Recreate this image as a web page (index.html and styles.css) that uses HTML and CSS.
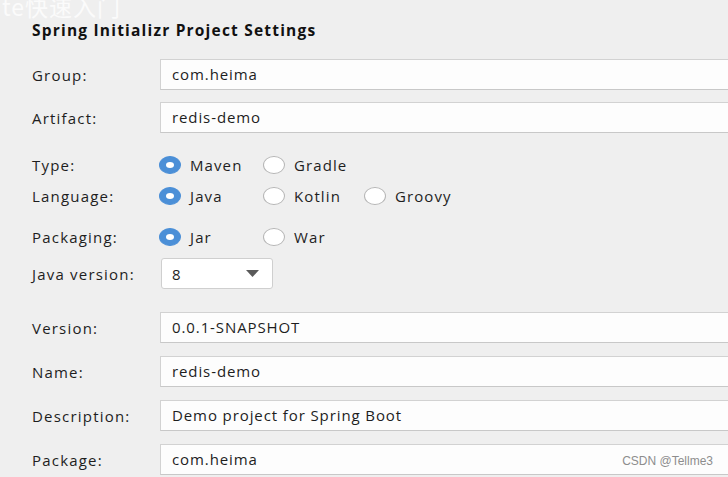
FILE: index.html
```html
<!DOCTYPE html>
<html>
<head>
<meta charset="utf-8">
<link rel="stylesheet" href="styles.css">
</head>
<body>
<div class="overlay-title">te快速入门</div>
<div class="page">
  <h1 class="title">Spring Initializr Project Settings</h1>

  <div class="row row-group">
    <span class="label">Group:</span>
    <div class="field">com.heima</div>
  </div>
  <div class="row row-artifact">
    <span class="label">Artifact:</span>
    <div class="field">redis-demo</div>
  </div>

  <div class="row radio-row row-type">
    <span class="label">Type:</span>
    <div class="options">
      <span class="opt"><span class="radio checked"></span>Maven</span>
      <span class="opt"><span class="radio"></span>Gradle</span>
    </div>
  </div>
  <div class="row radio-row row-lang">
    <span class="label">Language:</span>
    <div class="options">
      <span class="opt"><span class="radio checked"></span>Java</span>
      <span class="opt"><span class="radio"></span>Kotlin</span>
      <span class="opt"><span class="radio"></span>Groovy</span>
    </div>
  </div>
  <div class="row radio-row row-pack">
    <span class="label">Packaging:</span>
    <div class="options">
      <span class="opt"><span class="radio checked"></span>Jar</span>
      <span class="opt"><span class="radio"></span>War</span>
    </div>
  </div>
  <div class="row row-java">
    <span class="label">Java version:</span>
    <div class="select">
      <span>8</span>
      <svg class="arrow" width="13" height="7" viewBox="0 0 13 7"><path d="M0 0 H13 L6.5 7 Z" fill="#5a5a5a"/></svg>
    </div>
  </div>

  <div class="row row-version">
    <span class="label">Version:</span>
    <div class="field">0.0.1-SNAPSHOT</div>
  </div>
  <div class="row row-next">
    <span class="label">Name:</span>
    <div class="field">redis-demo</div>
  </div>
  <div class="row row-next">
    <span class="label">Description:</span>
    <div class="field">Demo project for Spring Boot</div>
  </div>
  <div class="row row-next">
    <span class="label">Package:</span>
    <div class="field">com.heima</div>
  </div>
</div>
<div class="watermark">CSDN @Tellme3</div>
</body>
</html>
```

FILE: styles.css
```css
html, body {
  margin: 0;
  padding: 0;
}
body {
  width: 728px;
  height: 477px;
  overflow: hidden;
  background: #efefef;
  position: relative;
  font-family: "Open Sans", "Noto Sans", "Noto Sans CJK SC", sans-serif;
  color: #1e1e1e;
}
.overlay-title {
  position: absolute;
  left: 2px;
  top: -6px;
  font-size: 23px;
  line-height: 24px;
  color: #fbfbfb;
  letter-spacing: 1px;
  font-family: "Noto Sans CJK SC", sans-serif;
}
.page {
  padding: 0 0 0 32px;
  display: flex;
  flex-direction: column;
}
.title {
  margin: 18px 0 0 0;
  font-size: 15.5px;
  font-weight: 700;
  line-height: 24px;
  letter-spacing: 1.2px;
  color: #111;
}
.row {
  display: flex;
  align-items: center;
  height: 31px;
  font-size: 15px;
  letter-spacing: 0.9px;
}
.label {
  width: 128px;
  flex: none;
  letter-spacing: 1.2px;
}
.row-group { margin-top: 17px; }
.row-artifact { margin-top: 12px; }
.radio-row { height: 26px; }
.row-type { margin-top: 19px; }
.row-lang { margin-top: 5px; }
.row-pack { margin-top: 15px; }
.row-java { margin-top: 8px; }
.row-version { margin-top: 23px; }
.row-next { margin-top: 13px; }

.field {
  flex: none;
  width: 600px;
  height: 29px;
  box-sizing: content-box;
  background: #fdfdfd;
  border: 1px solid #d2d2d2;
  border-bottom-color: #c8c8c8;
  border-right: none;
  padding-left: 11px;
  line-height: 29px;
}
.options {
  display: grid;
  grid-template-columns: 104px 101px 101px;
  margin-left: -1px;
  letter-spacing: 1.1px;
}
.opt {
  display: flex;
  align-items: center;
  gap: 9px;
}
.radio {
  width: 22px;
  height: 18px;
  box-sizing: border-box;
  border-radius: 50%;
  background: #fff;
  border: 1px solid #b5b5b5;
  position: relative;
  flex: none;
}
.radio.checked {
  background: #4b8fd7;
  border-color: #4b8fd7;
}
.radio.checked::after {
  content: "";
  position: absolute;
  left: 6px;
  top: 5px;
  width: 8px;
  height: 6px;
  border-radius: 50%;
  background: #fff;
}
.select {
  width: 112px;
  height: 31px;
  box-sizing: border-box;
  background: #fff;
  border: 1px solid #cfcfcf;
  border-radius: 3px;
  display: flex;
  align-items: center;
  justify-content: space-between;
  padding: 0 13px 0 10px;
  margin-left: 1px;
}
.arrow { display: block; }
.watermark {
  position: absolute;
  right: 15px;
  top: 454px;
  font-family: "Liberation Sans", sans-serif;
  font-size: 12px;
  color: #8d8d8d;
}
```
